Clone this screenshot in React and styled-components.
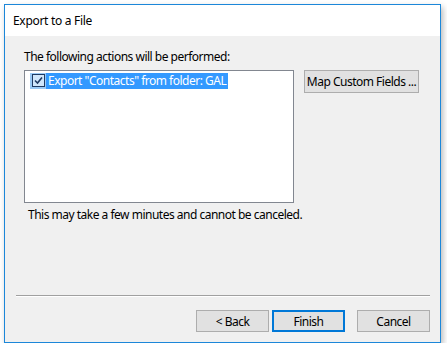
import React from "react";
import styled, { createGlobalStyle } from "styled-components";

const Global = createGlobalStyle`
  html, body { margin: 0; padding: 0; background: #ffffff; }
  body { font-family: "Noto Sans", "Segoe UI", Arial, sans-serif; font-size: 12px; letter-spacing: -0.5px; color: #000; }
`;

const Window = styled.div`
  margin: 4px 0 0 4px;
  width: 437px;
  height: 339px;
  box-sizing: border-box;
  border: 1px solid #1c87d9;
  box-shadow: 2px 3px 6px rgba(0, 0, 0, 0.28);
  display: flex;
  flex-direction: column;
  background: #f0f0f0;
`;

const TitleBar = styled.div`
  height: 31px;
  flex: none;
  background: #ffffff;
  display: flex;
  align-items: center;
  padding-left: 8px;
  font-size: 12px;
  letter-spacing: -0.3px;
  color: #000;
`;

const Body = styled.div`
  flex: 1;
  display: flex;
  flex-direction: column;
  padding: 13px 10px 10px 11px;
`;

const Label = styled.div`
  line-height: 16px;
  margin-left: ${(p) => p.$indent || 0}px;
`;

const Row = styled.div`
  display: flex;
  align-items: flex-start;
  gap: 10px;
  margin: 5px 0 4px 8px;
`;

const ListBox = styled.div`
  width: 270px;
  height: 133px;
  box-sizing: border-box;
  border: 1px solid #828790;
  background: #ffffff;
  padding: 1px 0 0 5px;
`;

const Item = styled.div`
  display: inline-flex;
  align-items: stretch;
  height: 16px;
`;

const CheckCell = styled.div`
  width: 16px;
  background: #99c9f5;
  display: flex;
  align-items: center;
  justify-content: center;
`;

const CheckBox = styled.div`
  width: 13px;
  height: 13px;
  box-sizing: border-box;
  border: 1px solid #1e3a62;
  background: #cfe6fb;
  display: flex;
  align-items: center;
  justify-content: center;
`;

const ItemText = styled.div`
  background: #3399ff;
  color: #ffffff;
  padding: 0 2px 0 2px;
  line-height: 16px;
  white-space: nowrap;
`;

const Button = styled.button`
  font-family: inherit;
  font-size: 12px;
  letter-spacing: inherit;
  white-space: nowrap;
  color: #000;
  width: ${(p) => p.$w || 73}px;
  height: ${(p) => p.$h || 22}px;
  box-sizing: border-box;
  background: #e1e1e1;
  border: ${(p) => (p.$default ? "2px solid #0078d7" : "1px solid #adadad")};
  padding: 0;
  margin: 0;
  flex: none;
`;

const Spacer = styled.div`
  flex: 1;
`;

const Separator = styled.div`
  height: 1px;
  background: #a0a0a0;
  border-bottom: 1px solid #ffffff;
  margin-bottom: 13px;
`;

const ButtonRow = styled.div`
  display: flex;
  justify-content: flex-end;
`;

const Group = styled.div`
  display: flex;
  gap: 3px;
  margin-right: 12px;
`;

export default function App() {
  return (
    <>
      <Global />
      <Window>
        <TitleBar>Export to a File</TitleBar>
        <Body>
          <Label $indent={8}>The following actions will be performed:</Label>
          <Row>
            <ListBox>
              <Item>
                <CheckCell>
                  <CheckBox>
                    <svg width="9" height="9" viewBox="0 0 9 9">
                      <path d="M1 4.5 L3.5 7 L8 1.5" fill="none" stroke="#1e3a62" strokeWidth="1.6" />
                    </svg>
                  </CheckBox>
                </CheckCell>
                <ItemText>Export "Contacts" from folder: GAL</ItemText>
              </Item>
            </ListBox>
            <Button $w={115} $h={23}>Map Custom Fields ...</Button>
          </Row>
          <Label $indent={12}>This may take a few minutes and cannot be canceled.</Label>
          <Spacer />
          <Separator />
          <ButtonRow>
            <Group>
              <Button>&lt; Back</Button>
              <Button $default>Finish</Button>
            </Group>
            <Button>Cancel</Button>
          </ButtonRow>
        </Body>
      </Window>
    </>
  );
}
